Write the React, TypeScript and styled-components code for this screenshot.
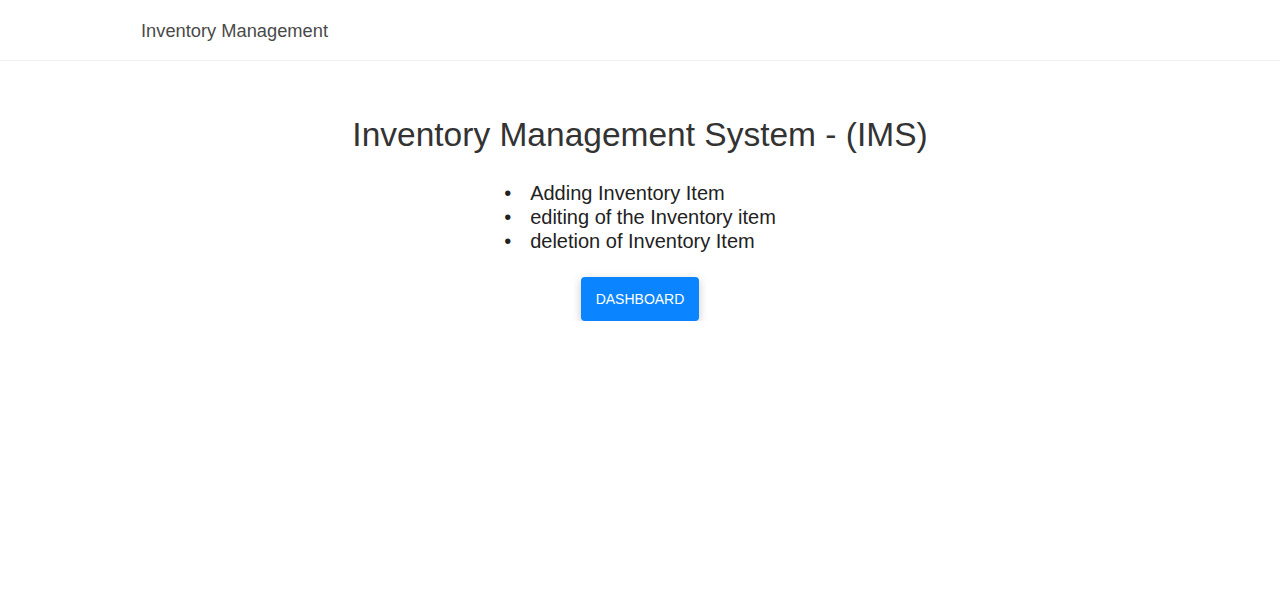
import React from 'react';
import styled, { createGlobalStyle } from "styled-components";

const GlobalStyle = createGlobalStyle`
    body {
        margin: 0;
        font-family: "Liberation Sans", Arial, sans-serif;
        background: #fff;
    }
`

const features = [
    'Adding Inventory Item',
    'editing of the Inventory item',
    'deletion of Inventory Item',
]

export default function App() {
    return (
        <>
            <GlobalStyle/>
            <NavBar>
                <Brand href={'#'}>Inventory Management</Brand>
            </NavBar>
            <Main>
                <Title>Inventory Management System - (IMS)</Title>
                <FeatureList>
                    {features.map(f => <Feature key={f}>{f}</Feature>)}
                </FeatureList>
                <DashboardButton>Dashboard</DashboardButton>
            </Main>
        </>
    );
}

const NavBar = styled.nav`
    height: 61px;
    display: flex;
    align-items: center;
    padding: 1px 141px 0;
    border-bottom: 1px solid #efefef;
    box-sizing: border-box;
`
const Brand = styled.a`
    font-size: 18.3px;
    color: #4a4a4a;
    text-decoration: none;
`
const Main = styled.main`
    display: flex;
    flex-direction: column;
    align-items: center;
    padding-top: 52px;
`
const Title = styled.h1`
    margin: 0;
    font-size: 33.5px;
    font-weight: 400;
    line-height: 44px;
    color: #333;
`
const FeatureList = styled.ul`
    margin: 24px 0 0;
    padding: 0 17px 0 17px;
    list-style: none;
    color: #222;
`
const Feature = styled.li`
    display: flex;
    font-size: 20px;
    line-height: 24px;

    &::before {
        content: "•";
        width: 26px;
        flex-shrink: 0;
    }
`
const DashboardButton = styled.button`
    margin-top: 24px;
    height: 44px;
    padding: 0 15px;
    border: none;
    border-radius: 4px;
    background: #0a84ff;
    color: #fff;
    font-family: inherit;
    font-size: 14px;
    text-transform: uppercase;
    box-shadow: 0 3px 10px rgba(0, 0, 0, 0.22);
    cursor: pointer;
`
